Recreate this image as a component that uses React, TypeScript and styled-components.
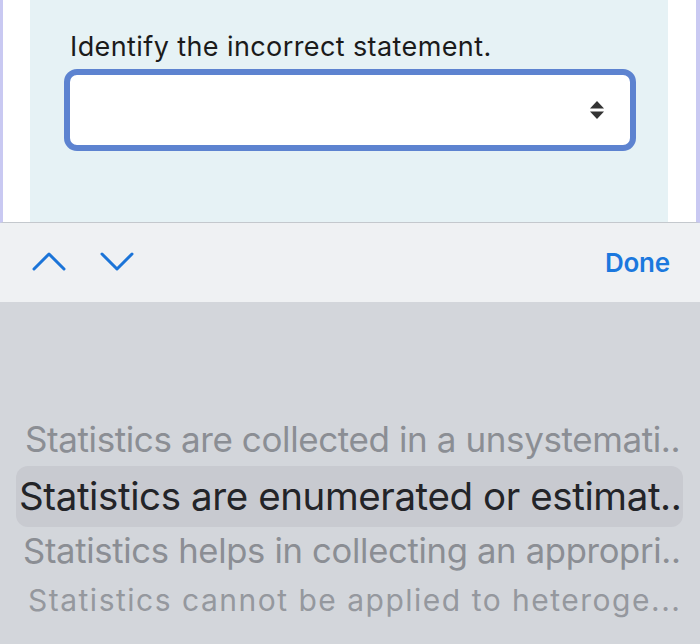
import React from 'react';
import styled, { createGlobalStyle } from 'styled-components';

const GlobalStyle = createGlobalStyle`
  html, body {
    margin: 0;
    padding: 0;
    background: #d3d6db;
    font-family: Inter, "Noto Sans", sans-serif;
  }
`;

type PickerOption = {
  label: string;
  size: number;
  color: string;
  spacing: number;
  pad: number;
  height: number;
  selected?: boolean;
};

// sizes shrink away from the wheel centre, like the iOS picker
const OPTIONS: PickerOption[] = [
  { label: 'Statistics are collected in a unsystemati..', size: 35, color: '#8b8e94', spacing: -0.4, pad: 25, height: 48 },
  { label: 'Statistics are enumerated or estimat..', size: 38.5, color: '#232428', spacing: -0.4, pad: 3, height: 61, selected: true },
  { label: 'Statistics helps in collecting an appropri..', size: 34.6, color: '#8b8e94', spacing: -0.3, pad: 23, height: 46 },
  { label: 'Statistics cannot be applied to heteroge...', size: 30, color: '#95989e', spacing: 1.5, pad: 28, height: 54 },
];

const App: React.FC = () => (
  <>
    <GlobalStyle />
    <Screen>
      <Page>
        <Panel>
          <Question>Identify the incorrect statement.</Question>
          <Select>
            <svg width="18" height="22" viewBox="0 0 18 22">
              <path d="M9 2 L16 9.5 H2 Z" fill="#333" />
              <path d="M9 20 L16 12.5 H2 Z" fill="#333" />
            </svg>
          </Select>
        </Panel>
      </Page>
      <Toolbar>
        <Arrows>
          <svg width="36" height="24" viewBox="0 0 36 24">
            <path d="M3 20 L18 5 L33 20" fill="none" stroke="#1b74d8" strokeWidth="3" strokeLinecap="round" strokeLinejoin="round" />
          </svg>
          <svg width="36" height="24" viewBox="0 0 36 24">
            <path d="M3 5 L18 20 L33 5" fill="none" stroke="#1b74d8" strokeWidth="3" strokeLinecap="round" strokeLinejoin="round" />
          </svg>
        </Arrows>
        <Done>Done</Done>
      </Toolbar>
      <Picker>
        {OPTIONS.map(o => (
          <Option
            key={o.label}
            $selected={!!o.selected}
            style={{
              fontSize: o.size,
              color: o.color,
              letterSpacing: o.spacing,
              paddingLeft: o.pad,
              height: o.height,
              lineHeight: `${o.height}px`,
            }}
          >
            {o.label}
          </Option>
        ))}
      </Picker>
    </Screen>
  </>
);

export default App;

const Screen = styled.div`
  width: 700px;
  height: 644px;
  display: flex;
  flex-direction: column;
  overflow: hidden;
`;

const Page = styled.div`
  height: 222px;
  flex-shrink: 0;
  background: #ffffff;
  border-left: 3px solid #c9c9f2;
  border-right: 4px solid #c9c9f2;
  border-bottom: 1px solid #c4c8cd;
  padding: 0 28px 0 27px;
  display: flex;
`;

const Panel = styled.div`
  flex: 1;
  background: #e6f2f5;
  padding: 30px 32px 0 34px;
  display: flex;
  flex-direction: column;
`;

const Question = styled.div`
  font-size: 27px;
  color: #1b1b1b;
  letter-spacing: 0.4px;
  line-height: 34px;
  margin-left: 6px;
`;

const Select = styled.div`
  margin-top: 5px;
  height: 70px;
  background: #ffffff;
  border: 6px solid #5d83d0;
  border-radius: 13px;
  display: flex;
  align-items: center;
  justify-content: flex-end;
  padding-right: 24px;
`;

const Toolbar = styled.div`
  height: 79px;
  flex-shrink: 0;
  box-sizing: border-box;
  background: #eff1f3;
  display: flex;
  align-items: center;
  justify-content: space-between;
  padding: 0 30px 4px 31px;
`;

const Arrows = styled.div`
  display: flex;
  gap: 32px;
  align-items: center;
`;

const Done = styled.div`
  font-size: 26px;
  font-weight: 600;
  color: #1b78de;
  letter-spacing: -0.2px;
  margin-top: 4px;
`;

const Picker = styled.div`
  flex: 1;
  background: #d3d6db;
  display: flex;
  flex-direction: column;
  padding-top: 113px;
`;

const Option = styled.div<{ $selected: boolean }>`
  flex-shrink: 0;
  white-space: nowrap;
  overflow: hidden;
  border-radius: 12px;
  margin: ${p => (p.$selected ? '3px 17px 0 16px' : '0')};
  background: ${p => (p.$selected ? '#c8cad0' : 'transparent')};
`;
